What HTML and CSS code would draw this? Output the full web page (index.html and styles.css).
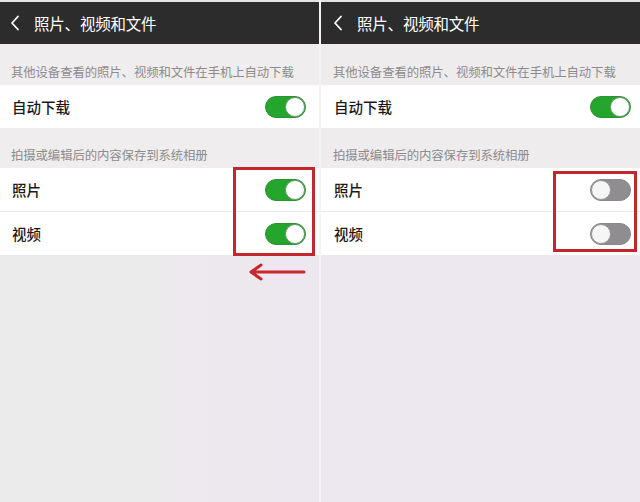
FILE: index.html
```html
<!DOCTYPE html>
<html lang="zh-CN">
<head>
<meta charset="utf-8">
<title>照片、视频和文件</title>
<link rel="stylesheet" href="styles.css">
</head>
<body>
<div class="stage">
  <section class="panel panel-left">
    <div class="topline"></div>
    <header class="navbar">
      <svg class="back" width="10" height="16" viewBox="0 0 10 16"><path d="M8 1.5 L2 8 L8 14.5" fill="none" stroke="#fff" stroke-width="1.8" stroke-linecap="round" stroke-linejoin="round"/></svg>
      <span class="title">照片、视频和文件</span>
    </header>
    <div class="caption caption-first">其他设备查看的照片、视频和文件在手机上自动下载</div>
    <div class="group">
      <div class="row"><span class="label">自动下载</span><span class="switch on"></span></div>
    </div>
    <div class="caption">拍摄或编辑后的内容保存到系统相册</div>
    <div class="group">
      <div class="row"><span class="label">照片</span><span class="switch on"></span></div>
      <div class="row"><span class="label">视频</span><span class="switch on"></span></div>
    </div>
    <div class="rest"></div>
    <div class="mark mark-left"></div>
    <svg class="arrow" width="60" height="20" viewBox="0 0 60 20"><path d="M57 10 H5 M14 3 L4 10 L14 17" fill="none" stroke="#c9262d" stroke-width="3" stroke-linecap="round" stroke-linejoin="round"/></svg>
  </section>
  <section class="panel panel-right">
    <div class="topline"></div>
    <header class="navbar">
      <svg class="back" width="10" height="16" viewBox="0 0 10 16"><path d="M8 1.5 L2 8 L8 14.5" fill="none" stroke="#fff" stroke-width="1.8" stroke-linecap="round" stroke-linejoin="round"/></svg>
      <span class="title">照片、视频和文件</span>
    </header>
    <div class="caption caption-first">其他设备查看的照片、视频和文件在手机上自动下载</div>
    <div class="group">
      <div class="row"><span class="label">自动下载</span><span class="switch on"></span></div>
    </div>
    <div class="caption">拍摄或编辑后的内容保存到系统相册</div>
    <div class="group">
      <div class="row"><span class="label">照片</span><span class="switch off"></span></div>
      <div class="row"><span class="label">视频</span><span class="switch off"></span></div>
    </div>
    <div class="rest"></div>
    <div class="mark mark-right"></div>
  </section>
</div>
</body>
</html>
```

FILE: styles.css
```css
html, body {
  margin: 0;
  padding: 0;
}
body {
  width: 640px;
  height: 502px;
  overflow: hidden;
  background: #f6f3f6;
  font-family: "Noto Sans CJK SC", "Noto Sans", sans-serif;
}
.stage {
  display: flex;
  gap: 2px;
  height: 502px;
}
.panel {
  position: relative;
  display: flex;
  flex-direction: column;
  width: 319px;
  height: 502px;
}
.topline {
  height: 2px;
  background: #e4e2e3;
}
.navbar {
  height: 42px;
  background: #2d2c2c;
  display: flex;
  align-items: center;
  padding-left: 10px;
  box-sizing: border-box;
}
.panel-right .navbar {
  padding-left: 12px;
}
.back {
  display: block;
  margin-right: 14px;
}
.title {
  color: #ffffff;
  font-size: 15.5px;
  letter-spacing: -0.2px;
  line-height: 20px;
}
.caption {
  height: 40px;
  box-sizing: border-box;
  padding: 0 0 5px 11px;
  display: flex;
  align-items: flex-end;
  font-size: 12.4px;
  line-height: 16px;
  color: #8d8b8c;
  background: #efeded;
  letter-spacing: -0.1px;
}
.caption-first {
  height: 41px;
  padding-bottom: 5px;
}
.panel-right .caption {
  padding-left: 12px;
  background: #efecee;
}
.group {
  background: #ffffff;
}
.row {
  height: 43px;
  display: flex;
  align-items: center;
  justify-content: space-between;
  padding: 0 13px 0 12px;
  position: relative;
  box-sizing: border-box;
}
.panel-right .row {
  padding: 0 9px 0 13px;
}
.row + .row {
  height: 44px;
  border-top: 1px solid #ebe9ea;
}
.label {
  font-size: 14.5px;
  font-weight: 500;
  color: #1a1a1a;
  line-height: 20px;
}
.switch {
  position: relative;
  width: 41px;
  height: 22px;
  border-radius: 11px;
  box-sizing: border-box;
}
.switch::after {
  content: "";
  position: absolute;
  top: 1px;
  width: 20px;
  height: 20px;
  border-radius: 50%;
  background: #ffffff;
  box-sizing: border-box;
}
.switch.on {
  background: #24a52c;
  border: 1px solid #2f8f37;
}
.switch.on::after {
  top: 0;
  right: 0;
  border: 1px solid #6c9a6f;
}
.switch.off {
  background: #8f8d8f;
  border: 1px solid #8a888a;
}
.switch.off::after {
  top: 0;
  left: 0;
  border: 1px solid #9a989a;
  background: #f6f6f6;
}
.rest {
  flex: 1;
  background: linear-gradient(90deg, #ebebeb 0%, #ebebeb 45%, #ede8ee 65%, #ede8ef 100%);
}
.panel-right .rest {
  background: #ede8ef;
}
.mark {
  position: absolute;
  border: 3px solid #c3262c;
  box-sizing: border-box;
}
.mark-left {
  left: 233px;
  top: 167px;
  width: 82px;
  height: 89px;
}
.mark-right {
  left: 232px;
  top: 171px;
  width: 84px;
  height: 81px;
}
.arrow {
  position: absolute;
  left: 247px;
  top: 262px;
}
```
